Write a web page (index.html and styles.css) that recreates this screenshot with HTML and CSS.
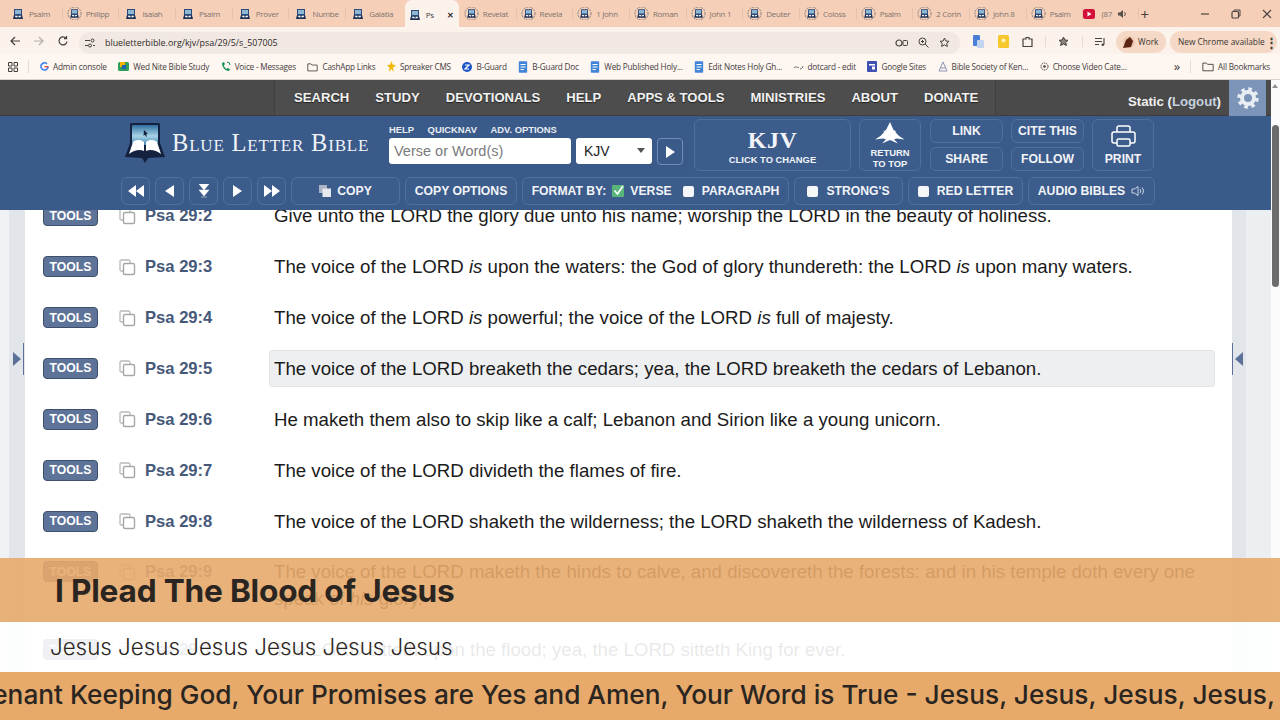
FILE: index.html
```html
<!DOCTYPE html>
<html lang="en">
<head>
  <meta charset="UTF-8" />
  <meta name="viewport" content="width=device-width, initial-scale=1.0" />
  <title>Psalm 29 - Blue Letter Bible</title>
  <link rel="stylesheet" href="styles.css">
</head>
<body>

  <svg class="defs" width="0" height="0">
    <defs>
      <linearGradient id="screenGlow" x1="0" y1="0" x2="0" y2="1">
        <stop offset="0" stop-color="#2f6f9f" />
        <stop offset="0.55" stop-color="#a9d3e6" />
        <stop offset="1" stop-color="#3f86b0" />
      </linearGradient>
      <symbol id="blb" viewBox="0 0 40 42">
        <rect x="5" y="1" width="30" height="24" rx="1.5" fill="#14213f" />
        <rect x="7" y="3" width="26" height="20" fill="url(#screenGlow)" />
        <path d="M19 8l4 4-2 .3 1 2-1 .4-1-2-1.5 1z" fill="#14213f" />
        <path d="M0 35L5 21 20 24 35 21 40 35 23 36 20 41 17 36z" fill="#14213f" />
        <path d="M4 32C9 28 15 27 19 29V20C15 17 10 18 8 20z" fill="#fff" />
        <path d="M36 32C31 28 25 27 21 29V20C25 17 30 18 32 20z" fill="#fff" />
      </symbol>
      <symbol id="fav" viewBox="0 0 12 12">
        <rect x="2" y="1" width="8" height="7" fill="#2c4a78" />
        <rect x="3" y="2" width="6" height="4" fill="#8db7d2" />
        <path d="M1 11L2 7 6 8 10 7 11 11z" fill="#1d3156" />
        <path d="M3 9L3.5 7.5 5.5 8V9.5zM9 9L8.5 7.5 6.5 8V9.5z" fill="#fff" />
      </symbol>
      <symbol id="fav-ring" viewBox="0 0 16 16">
        <circle cx="8" cy="8" r="7" fill="none" stroke="#7c7a78" stroke-width="1" stroke-dasharray="2 1" />
        <use href="#fav" x="2.5" y="2.5" width="11" height="11" />
      </symbol>
      <symbol id="copy" viewBox="0 0 18 18">
        <path d="M5 13H3a2 2 0 0 1-1-1V3a2 2 0 0 1 1-1h8a2 2 0 0 1 1 1v2" fill="none" stroke="#b9b9b9" stroke-width="1.3" />
        <rect x="5.5" y="5.5" width="11" height="11" rx="1.5" fill="#fff" stroke="#a6a6a6" stroke-width="1.4" />
      </symbol>
      <symbol id="doc" viewBox="0 0 12 14">
        <rect x="1" y="0" width="10" height="14" rx="1" fill="#4285d8" />
        <path d="M3 4h6M3 7h6M3 10h4" stroke="#fff" stroke-width="1.2" />
      </symbol>
      <symbol id="folder" viewBox="0 0 14 12">
        <path d="M1 2h4l1.5 1.5H13V11H1z" fill="none" stroke="#4a4542" stroke-width="1.1" />
      </symbol>
    </defs>
  </svg>

  <div class="tabstrip">
    <div class="tab"><svg class="fav"><use href="#fav" /></svg><span>Psalm</span></div>
    <div class="tab"><svg class="fav-r"><use href="#fav-ring" /></svg><span>Philipp</span></div>
    <div class="tab"><svg class="fav"><use href="#fav" /></svg><span>Isaiah</span></div>
    <div class="tab"><svg class="fav"><use href="#fav" /></svg><span>Psalm</span></div>
    <div class="tab"><svg class="fav"><use href="#fav" /></svg><span>Prover</span></div>
    <div class="tab"><svg class="fav"><use href="#fav" /></svg><span>Numbe</span></div>
    <div class="tab tab-last"><svg class="fav"><use href="#fav" /></svg><span>Galatia</span></div>
    <div class="tab tab-active"><svg class="fav"><use href="#fav" /></svg><span>Ps</span><b class="tab-x">✕</b></div>
    <div class="tab"><svg class="fav-r"><use href="#fav-ring" /></svg><span>Revelat</span></div>
    <div class="tab"><svg class="fav-r"><use href="#fav-ring" /></svg><span>Revela</span></div>
    <div class="tab"><svg class="fav-r"><use href="#fav-ring" /></svg><span>1 John</span></div>
    <div class="tab"><svg class="fav-r"><use href="#fav-ring" /></svg><span>Roman</span></div>
    <div class="tab"><svg class="fav-r"><use href="#fav-ring" /></svg><span>John 1</span></div>
    <div class="tab"><svg class="fav-r"><use href="#fav-ring" /></svg><span>Deuter</span></div>
    <div class="tab"><svg class="fav-r"><use href="#fav-ring" /></svg><span>Coloss</span></div>
    <div class="tab"><svg class="fav-r"><use href="#fav-ring" /></svg><span>Psalm</span></div>
    <div class="tab"><svg class="fav-r"><use href="#fav-ring" /></svg><span>2 Corin</span></div>
    <div class="tab"><svg class="fav-r"><use href="#fav-ring" /></svg><span>John 8</span></div>
    <div class="tab"><svg class="fav-r"><use href="#fav-ring" /></svg><span>Psalm</span></div>
    <div class="tab tab-yt">
      <svg width="12" height="10" viewBox="0 0 12 10"><rect width="12" height="10" rx="2.5" fill="#d2103a" /><path d="M4.5 2.5L8.5 5 4.5 7.5z" fill="#fff" /></svg>
      <span>(87</span>
      <svg width="9" height="10" viewBox="0 0 9 10"><path d="M0 3.5h2L5 1v8L2 6.5H0z" fill="#55504c" /><path d="M6.5 3a3 3 0 0 1 0 4" fill="none" stroke="#55504c" /></svg>
    </div>
    <div class="new-tab">+</div>
    <div class="win-controls">
      <svg width="12" height="12" viewBox="0 0 12 12"><path d="M2 6h8" stroke="#4a4542" stroke-width="1.2" /></svg>
      <svg width="12" height="12" viewBox="0 0 12 12"><rect x="2" y="3.5" width="6.5" height="6.5" rx="1" fill="none" stroke="#4a4542" stroke-width="1.2" /><path d="M4 3.5V2h6v6H8.5" fill="none" stroke="#4a4542" /></svg>
      <svg width="12" height="12" viewBox="0 0 12 12"><path d="M2 2l8 8M10 2l-8 8" stroke="#4a4542" stroke-width="1.1" /></svg>
    </div>
  </div>

  <div class="toolbar">
    <svg class="tb-icon" width="12" height="12" viewBox="0 0 12 12"><path d="M11 6H2M6 2L2 6l4 4" fill="none" stroke="#45403d" stroke-width="1.2" /></svg>
    <svg class="tb-icon" width="12" height="12" viewBox="0 0 12 12"><path d="M1 6h9M6 2l4 4-4 4" fill="none" stroke="#b3aeaa" stroke-width="1.2" /></svg>
    <svg class="tb-icon" width="12" height="12" viewBox="0 0 12 12"><path d="M10 6.5A4 4 0 1 1 9 3.2M9.5 1v2.7H7" fill="none" stroke="#45403d" stroke-width="1.2" /></svg>
    <div class="omnibox">
      <svg width="12" height="10" viewBox="0 0 12 10"><path d="M1 2.5h5M1 7.5h3M9 7.5h2" stroke="#45403d" stroke-width="1.1" /><circle cx="8.5" cy="2.5" r="1.5" fill="none" stroke="#45403d" /><circle cx="6" cy="7.5" r="1.5" fill="none" stroke="#45403d" /></svg>
      <span class="url">blueletterbible.org/kjv/psa/29/5/s_507005</span>
      <svg class="omni-end" width="13" height="10" viewBox="0 0 13 10"><circle cx="4" cy="5" r="3" fill="none" stroke="#45403d" stroke-width="1.2" /><rect x="8" y="2.5" width="4.5" height="5" rx="1" fill="none" stroke="#45403d" /></svg>
      <svg width="11" height="11" viewBox="0 0 11 11"><circle cx="4.5" cy="4.5" r="3.5" fill="none" stroke="#45403d" /><path d="M7 7l3.5 3.5M3 4.5h3M4.5 3v3" stroke="#45403d" /></svg>
      <svg width="11" height="11" viewBox="0 0 11 11"><path d="M5.5 1l1.4 3 3.100.3-2.300 2.100.7 3.100-2.900-1.600-2.900 1.600.7-3.100L1 4.300 4.100 4z" fill="none" stroke="#45403d" /></svg>
    </div>
    <div class="ext-group">
      <svg width="11" height="13" viewBox="0 0 11 13"><rect width="7" height="11" rx="1" fill="#4a7fd8" /><rect x="4" y="5" width="7" height="8" rx="1" fill="#c2d4ee" /></svg>
      <svg width="11" height="13" viewBox="0 0 11 13"><rect width="11" height="13" rx="1.5" fill="#f6c82e" /><circle cx="5.5" cy="5.5" r="2" fill="#fff3b8" /></svg>
      <svg width="11" height="12" viewBox="0 0 11 12"><path d="M1 3h3V1.5h3V3h3v7.5H1z" fill="none" stroke="#45403d" stroke-width="1.2" /></svg>
      <i class="tb-sep"></i>
      <svg width="11" height="11" viewBox="0 0 11 11"><path d="M5.5 1l1.4 3 3.100.3-2.300 2.100.7 3.100-2.900-1.600-2.900 1.600.7-3.100L1 4.300 4.100 4z" fill="#8a8480" stroke="#45403d" /></svg>
      <i class="tb-sep"></i>
      <svg width="11" height="10" viewBox="0 0 11 10"><path d="M0 1.5h7M0 4.5h7M0 7.5h4M9 1v6.5" stroke="#45403d" stroke-width="1.1" /><circle cx="7.8" cy="7.8" r="1.3" fill="#45403d" /></svg>
    </div>
    <div class="pill pill-work">
      <svg width="13" height="14" viewBox="0 0 13 14"><circle cx="7" cy="7" r="6" fill="#e9c7ae" /><path d="M1 13L4 5l4-3 3 4-2 6z" fill="#5b2413" /></svg>
      <span>Work</span>
    </div>
    <div class="pill pill-update"><span>New Chrome available</span><b class="dots">⋮</b></div>
  </div>

  <div class="bookmarks">
    <svg class="apps" width="10" height="10" viewBox="0 0 10 10"><path d="M.5.5H4V4H.5zM6 .5h3.500V4H6zM.5 6H4v3.500H.5zM6 6h3.500v3.500H6z" fill="none" stroke="#45403d" /></svg>
    <i class="bm-sep"></i>
    <div class="bm"><svg width="9" height="9" viewBox="0 0 10 10"><path d="M9 5.5A4 4 0 1 1 7.800 2" fill="none" stroke="#4285f4" stroke-width="1.8" /><path d="M5 5.2h4.500" stroke="#ea4335" stroke-width="1.4" /></svg>Admin console</div>
    <div class="bm"><svg width="11" height="9" viewBox="0 0 11 9"><rect width="11" height="9" rx="1.5" fill="#2e9e5b" /><rect x="2" y="0" width="5" height="5" fill="#f4b400" /><rect x="4" y="3" width="4" height="4" fill="#1a5fb4" /></svg>Wed Nite Bible Study</div>
    <div class="bm"><svg width="10" height="11" viewBox="0 0 10 11"><path d="M1 2c0 4 3 8 7 8l1-2-2.5-1L5.5 8C4 7 3 5.5 2.8 4.3L4 3.3 3 1z" fill="#1a8f50" /><path d="M6 1a3 3 0 0 1 3 3" fill="none" stroke="#1a8f50" /></svg>Voice - Messages</div>
    <div class="bm"><svg width="11" height="10"><use href="#folder" /></svg>CashApp Links</div>
    <div class="bm"><svg width="9" height="11" viewBox="0 0 9 11"><path d="M4.5 0l1.2 3.5L9 4.5 6 6.5 6.5 11 4.5 8 2 11l.6-4.500L0 4.500l3.300-1z" fill="#f2b705" /></svg>Spreaker CMS</div>
    <div class="bm"><svg width="10" height="10" viewBox="0 0 10 10"><circle cx="5" cy="5" r="5" fill="#1d55c9" /><path d="M3 3h4L3 7h4" fill="none" stroke="#fff" stroke-width="1.2" /></svg>B-Guard</div>
    <div class="bm"><svg width="10" height="12"><use href="#doc" /></svg>B-Guard Doc</div>
    <div class="bm"><svg width="10" height="12"><use href="#doc" /></svg>Web Published Holy...</div>
    <div class="bm"><svg width="10" height="12"><use href="#doc" /></svg>Edit Notes Holy Gh...</div>
    <div class="bm"><svg width="10" height="8" viewBox="0 0 10 8"><path d="M0 5c2-3 3 1 5-1M6 6c2 0 3-2 3-3" fill="none" stroke="#6b6663" /></svg>dotcard - edit</div>
    <div class="bm"><svg width="10" height="11" viewBox="0 0 10 11"><rect width="10" height="11" rx="1" fill="#3d4fb0" /><rect x="2" y="3" width="6" height="1.5" fill="#fff" /><rect x="5" y="5.5" width="3" height="3" fill="#fff" /></svg>Google Sites</div>
    <div class="bm"><svg width="10" height="11" viewBox="0 0 10 11"><path d="M1 10L5 1l4 9zM2 7h6" fill="none" stroke="#8d94b8" /></svg>Bible Society of Ken...</div>
    <div class="bm"><svg width="9" height="9" viewBox="0 0 9 9"><circle cx="4.5" cy="4.5" r="3.5" fill="none" stroke="#45403d" stroke-dasharray="1.5 .7" /><circle cx="4.5" cy="4.5" r="1.3" fill="#45403d" /></svg>Choose Video Cate...</div>
    <div class="bm-end">
      <span class="chev">»</span>
      <i class="bm-sep"></i>
      <div class="bm"><svg width="12" height="11"><use href="#folder" /></svg>All Bookmarks</div>
    </div>
  </div>

  <div class="window">
    <div class="site">
      <header class="site-nav">
        <nav class="menu">
          <a>SEARCH</a><a>STUDY</a><a>DEVOTIONALS</a><a>HELP</a><a>APPS &amp; TOOLS</a><a>MINISTRIES</a><a>ABOUT</a><a>DONATE</a>
        </nav>
        <div class="user">Static (<span class="logout">Logout</span>)</div>
        <div class="gear">
          <svg width="22" height="22" viewBox="0 0 22 22">
            <circle cx="11" cy="11" r="6" fill="none" stroke="#e8edf4" stroke-width="4" />
            <circle cx="11" cy="11" r="9" fill="none" stroke="#e8edf4" stroke-width="3.5" stroke-dasharray="3.57 3.5" />
          </svg>
        </div>
      </header>

      <div class="site-bar">
        <div class="bar-top">
          <div class="brand">
            <svg width="40" height="42"><use href="#blb" /></svg>
            <span class="brand-name">Blue Letter Bible</span>
          </div>
          <div class="search">
            <div class="search-links"><a>HELP</a><a>QUICKNAV</a><a>ADV. OPTIONS</a></div>
            <div class="search-row">
              <input class="search-input" type="text" placeholder="Verse or Word(s)" />
              <div class="version-select">KJV<i class="caret"></i></div>
              <div class="go"><i class="go-arrow"></i></div>
            </div>
          </div>
          <div class="box kjv-box"><strong>KJV</strong><small>CLICK TO CHANGE</small></div>
          <div class="box return-box">
            <svg width="30" height="24" viewBox="0 0 30 24"><path d="M15 0l3.5 8 3 1.5-1.5.3 4 4.2 5.5 3.5-7.5-1-3 .8 4 4.2-8-3.5-8 3.5 4-4.2-3-.8L0 17.5 5.5 14l4-4.2L8 9.5l3-1.500z" fill="#fff" /></svg>
            <small>RETURN<br>TO TOP</small>
          </div>
          <div class="link-grid">
            <div class="box">LINK</div>
            <div class="box">CITE THIS</div>
            <div class="box">SHARE</div>
            <div class="box">FOLLOW</div>
          </div>
          <div class="box print-box">
            <svg width="25" height="23" viewBox="0 0 25 23"><path d="M6 7V3a2 2 0 0 1 2-2h9a2 2 0 0 1 2 2v4" fill="none" stroke="#fff" stroke-width="1.5" /><path d="M6 18H3a2 2 0 0 1-2-2V9a2 2 0 0 1 2-2h19a2 2 0 0 1 2 2v7a2 2 0 0 1-2 2h-3" fill="none" stroke="#fff" stroke-width="1.5" /><rect x="6" y="14" width="13" height="7" rx="1.5" fill="none" stroke="#fff" stroke-width="1.5" /></svg>
            <span>PRINT</span>
          </div>
        </div>
        <div class="bar-bottom">
          <div class="box nav-btn"><svg width="16" height="12" viewBox="0 0 16 12"><path d="M8 0v12L0 6zM16 0v12L8 6z" fill="#fff" /></svg></div>
          <div class="box nav-btn"><svg width="9" height="12" viewBox="0 0 9 12"><path d="M9 0v12L0 6z" fill="#fff" /></svg></div>
          <div class="box nav-btn"><svg width="10" height="14" viewBox="0 0 10 14"><path d="M0 0h10L5 6zM0 6h10l-5 6zM2 13h6" fill="#fff" stroke="#fff" stroke-width=".5" /></svg></div>
          <div class="box nav-btn"><svg width="9" height="12" viewBox="0 0 9 12"><path d="M0 0v12l9-6z" fill="#fff" /></svg></div>
          <div class="box nav-btn"><svg width="16" height="12" viewBox="0 0 16 12"><path d="M0 0v12l8-6zM8 0v12l8-6z" fill="#fff" /></svg></div>
          <div class="box copy-btn">
            <svg width="12" height="12" viewBox="0 0 12 12"><rect width="8" height="8" fill="#aab4c4" /><rect x="3.5" y="3.5" width="8.5" height="8.5" fill="#e6e9ee" /></svg>
            COPY
          </div>
          <div class="box copy-opts">COPY OPTIONS</div>
          <div class="box format-box">
            FORMAT BY:
            <svg class="check" width="12" height="12" viewBox="0 0 12 12"><rect width="12" height="12" rx="1" fill="#59b57a" /><path d="M2.5 5.5L5.5 9 11 1" fill="none" stroke="#fff" stroke-width="1.6" /></svg>
            <span>VERSE</span>
            <i class="tick tick-para"></i>
            PARAGRAPH
          </div>
          <div class="box strongs-box"><i class="tick"></i>STRONG'S</div>
          <div class="box red-box"><i class="tick"></i>RED LETTER</div>
          <div class="box audio-box">
            AUDIO BIBLES
            <svg width="14" height="12" viewBox="0 0 14 12"><path d="M1 4h2.5L7 1.5v9L3.5 8H1z" fill="none" stroke="#c9d3e2" /><path d="M9 4a3 3 0 0 1 0 4M11 2.5a5 5 0 0 1 0 7" fill="none" stroke="#c9d3e2" /></svg>
          </div>
        </div>
      </div>

      <main class="reader">
        <aside class="gutter gutter-left"><i class="handle handle-left"></i></aside>
        <section class="verses">
          <div class="verse">
            <button class="tools">TOOLS</button><svg class="copy-icon"><use href="#copy" /></svg><a class="ref">Psa 29:2</a>
            <p class="text">Give unto the LORD the glory due unto his name; worship the LORD in the beauty of holiness.</p>
          </div>
          <div class="verse">
            <button class="tools">TOOLS</button><svg class="copy-icon"><use href="#copy" /></svg><a class="ref">Psa 29:3</a>
            <p class="text">The voice of the LORD <em>is</em> upon the waters: the God of glory thundereth: the LORD <em>is</em> upon many waters.</p>
          </div>
          <div class="verse">
            <button class="tools">TOOLS</button><svg class="copy-icon"><use href="#copy" /></svg><a class="ref">Psa 29:4</a>
            <p class="text">The voice of the LORD <em>is</em> powerful; the voice of the LORD <em>is</em> full of majesty.</p>
          </div>
          <div class="verse verse-current">
            <button class="tools">TOOLS</button><svg class="copy-icon"><use href="#copy" /></svg><a class="ref">Psa 29:5</a>
            <p class="text">The voice of the LORD breaketh the cedars; yea, the LORD breaketh the cedars of Lebanon.</p>
          </div>
          <div class="verse">
            <button class="tools">TOOLS</button><svg class="copy-icon"><use href="#copy" /></svg><a class="ref">Psa 29:6</a>
            <p class="text">He maketh them also to skip like a calf; Lebanon and Sirion like a young unicorn.</p>
          </div>
          <div class="verse">
            <button class="tools">TOOLS</button><svg class="copy-icon"><use href="#copy" /></svg><a class="ref">Psa 29:7</a>
            <p class="text">The voice of the LORD divideth the flames of fire.</p>
          </div>
          <div class="verse">
            <button class="tools">TOOLS</button><svg class="copy-icon"><use href="#copy" /></svg><a class="ref">Psa 29:8</a>
            <p class="text">The voice of the LORD shaketh the wilderness; the LORD shaketh the wilderness of Kadesh.</p>
          </div>
          <div class="verse">
            <button class="tools">TOOLS</button><svg class="copy-icon"><use href="#copy" /></svg><a class="ref">Psa 29:9</a>
            <p class="text">The voice of the LORD maketh the hinds to calve, and discovereth the forests: and in his temple doth every one speak of <em>his</em> glory.</p>
          </div>
          <div class="verse">
            <button class="tools">TOOLS</button><svg class="copy-icon"><use href="#copy" /></svg><a class="ref">Psa 29:10</a>
            <p class="text">The LORD sitteth upon the flood; yea, the LORD sitteth King for ever.</p>
          </div>
        </section>
        <aside class="gutter gutter-right"><i class="handle handle-right"></i></aside>
      </main>
    </div>

    <div class="scrollbar"><i class="scroll-up"></i><div class="scroll-thumb"></div></div>
  </div>

  <div class="lower-third">
    <div class="lt-title">I Plead The Blood of Jesus</div>
    <div class="lt-line">Jesus Jesus Jesus Jesus Jesus Jesus</div>
    <div class="lt-ticker"><span>Covenant Keeping God, Your Promises are Yes and Amen, Your Word is True - Jesus, Jesus, Jesus, Jesus, Jesus</span></div>
  </div>

</body>
</html>
```

FILE: styles.css
```css
* {
  box-sizing: border-box;
}

html,
body {
  margin: 0;
  height: 720px;
  overflow: hidden;
}

body {
  position: relative;
  display: flex;
  flex-direction: column;
  font-family: "Liberation Sans", Arial, sans-serif;
  background: #fff;
}

.defs {
  position: absolute;
}

/* browser chrome */
.tabstrip {
  display: flex;
  align-items: center;
  height: 27px;
  padding-left: 6px;
  background: #f6cfb8;
  font-family: "Open Sans", sans-serif;
  font-size: 8px;
  letter-spacing: -0.3px;
  color: #7d746e;
}

.tab {
  display: flex;
  align-items: center;
  gap: 5px;
  flex: none;
  width: 56.7px;
  height: 13px;
  padding-left: 6px;
  border-right: 1px solid #e8c3ac;
  white-space: nowrap;
  overflow: hidden;
}

.fav {
  width: 12px;
  height: 12px;
  flex: none;
}

.fav-r {
  width: 15px;
  height: 15px;
  flex: none;
  margin: 0 -1px 0 -2px;
}

.tab-last {
  border-right: 0;
}

.tab-active {
  width: 54px;
  height: 27px;
  margin: 0 1px 0 2px;
  padding: 2px 0 0 4px;
  background: #fcf2ec;
  border: 0;
  border-radius: 7px 7px 0 0;
  color: #45403d;
}

.tab-x {
  margin-left: 8px;
  font-size: 8px;
  color: #332f2c;
}

.tab-yt {
  width: 57px;
  gap: 6px;
  padding-left: 1px;
  margin-left: -1px;
}

.new-tab {
  padding-left: 1px;
  font-size: 15px;
  color: #45403d;
}

.win-controls {
  display: flex;
  gap: 19px;
  margin-left: 50px;
}

.toolbar {
  display: flex;
  align-items: center;
  height: 27px;
  padding: 0 3px 0 9px;
  background: #fcf2ec;
}

.tb-icon {
  flex: none;
  margin-right: 12px;
}

.omnibox {
  display: flex;
  align-items: center;
  gap: 10px;
  width: 883px;
  height: 22px;
  margin: 4px 0 0 -2px;
  padding: 0 10px 0 5px;
  border-radius: 11px;
  background: #f1e8e3;
}

.url {
  margin-left: -1px;
  flex: 1;
  font-family: "Open Sans", sans-serif;
  font-size: 8.9px;
  color: #2e2a28;
}

.ext-group {
  display: flex;
  align-items: center;
  gap: 13.3px;
  margin-left: 13px;
  margin-top: 2px;
}

.tb-sep {
  width: 1px;
  height: 11px;
  margin: 0 -1px;
  background: #e7d9d0;
}

.pill {
  display: flex;
  align-items: center;
  height: 22px;
  margin-top: 2px;
  border-radius: 11px;
  background: #f5d8c6;
  font-family: "Open Sans", sans-serif;
  font-size: 8.3px;
  color: #3a3532;
  white-space: nowrap;
}

.pill-work {
  gap: 3px;
  margin-left: 10px;
  width: 50px;
  padding-left: 6px;
}

.pill-update {
  margin-left: 4px;
  width: 107px;
  padding-left: 8px;
  justify-content: space-between;
}

.dots {
  font-size: 13px;
  padding-right: 3px;
}

.bookmarks {
  display: flex;
  align-items: center;
  height: 26px;
  padding: 0 10px 0 8px;
  background: #fdf6f1;
  border-bottom: 1px solid #d9d3cf;
  font-family: "Open Sans", sans-serif;
  font-size: 8.2px;
  letter-spacing: -0.2px;
  color: #45403d;
  white-space: nowrap;
}

.bm-sep {
  width: 1px;
  height: 13px;
  background: #e7dcd5;
  margin: 0 11px 0 10px;
}

.bm {
  display: flex;
  align-items: center;
  gap: 4px;
  margin-right: 11.5px;
}

.bm svg {
  flex: none;
}

.bm-end {
  display: flex;
  align-items: center;
  margin-left: auto;
}

.bm-end .bm {
  margin: 0;
}

.chev {
  font-size: 13px;
  color: #45403d;
  padding-bottom: 2px;
}

/* site */
.window {
  flex: 1;
  display: flex;
  min-height: 0;
}

.site {
  flex: 1;
  display: flex;
  flex-direction: column;
  min-width: 0;
}

.site-nav {
  display: flex;
  height: 36px;
  padding-left: 274px;
  background: #4a4a4a;
  border-bottom: 1px solid #3f3f3f;
}

.menu {
  display: flex;
  align-items: center;
  width: 722px;
  padding-left: 6px;
  background: #4d4d4d;
  border-left: 1px solid #404040;
  border-right: 1px solid #404040;
}

.menu a {
  padding: 0 13px;
  font-size: 13.1px;
  font-weight: bold;
  color: #f2f2f2;
  white-space: nowrap;
  text-shadow: 0 1px 1px #222;
}

.user {
  margin-left: auto;
  align-self: flex-end;
  padding-bottom: 6px;
  font-size: 13.2px;
  font-weight: bold;
  color: #f0f0f0;
}

.logout {
  color: #c5d0de;
}

.gear {
  display: flex;
  align-items: center;
  justify-content: center;
  width: 37px;
  height: 36px;
  margin: 0 5px 0 8px;
  background: #7b94b8;
}

.site-bar {
  display: flex;
  flex-direction: column;
  gap: 6px;
  height: 94px;
  padding-top: 3px;
  background: #3a5a8a;
}

.bar-top {
  display: flex;
  height: 52px;
}

.brand {
  display: flex;
  align-items: center;
  gap: 7px;
  width: 264px;
  margin-left: 125px;
  padding-bottom: 4px;
}

.brand-name {
  font-family: "Liberation Serif", serif;
  font-variant: small-caps;
  font-size: 24.5px;
  letter-spacing: 0.8px;
  color: #f1f3f6;
  white-space: nowrap;
}

.search {
  width: 294px;
  margin-right: 11px;
}

.search-links {
  display: flex;
  gap: 13.6px;
  height: 19px;
  font-size: 9.4px;
  font-weight: bold;
  color: #e8ecf2;
  align-items: center;
  padding-top: 1px;
}

.search-row {
  display: flex;
  gap: 5px;
}

.search-input {
  width: 182px;
  height: 26px;
  padding: 0 5px;
  border: 0;
  border-radius: 3px;
  font-family: inherit;
  font-size: 14.5px;
}

.search-input::placeholder {
  color: #7b7b7b;
  opacity: 1;
}

.version-select {
  position: relative;
  width: 76px;
  height: 26px;
  padding: 5px 0 0 8px;
  border-radius: 3px;
  background: #fff;
  font-size: 14px;
  color: #222;
}

.caret {
  position: absolute;
  top: 10px;
  right: 7px;
  border: 4px solid transparent;
  border-top: 5px solid #555;
  border-bottom: 0;
}

.go {
  display: flex;
  align-items: center;
  justify-content: center;
  width: 26px;
  height: 27px;
  border: 1px solid #6f8db8;
  border-radius: 4px;
}

.go-arrow {
  border: 6px solid transparent;
  border-left: 9px solid #fff;
  border-right: 0;
}

.box {
  display: flex;
  align-items: center;
  justify-content: center;
  flex: none;
  border: 1px solid #4f6f9d;
  border-radius: 6px;
  background: #3c5c8c;
  font-size: 12.2px;
  font-weight: bold;
  color: #f2f4f7;
  white-space: nowrap;
}

.kjv-box {
  flex-direction: column;
  width: 157px;
  padding-top: 4px;
}

.kjv-box strong {
  font-family: "Liberation Serif", serif;
  font-size: 24px;
  line-height: 25px;
  letter-spacing: 0.5px;
}

.kjv-box small {
  font-size: 9.4px;
  line-height: 13px;
}

.return-box {
  flex-direction: column;
  width: 62px;
  margin-left: 8px;
}

.return-box svg {
  margin-bottom: 1px;
}

.return-box small {
  font-size: 9.4px;
  line-height: 11px;
  text-align: center;
}

.link-grid {
  display: grid;
  grid-template-columns: 73px 73px;
  grid-template-rows: 24px 24px;
  gap: 4px 8px;
  margin: 0 8px 0 9px;
}

.print-box {
  flex-direction: column;
  gap: 4px;
  width: 62px;
}

.bar-bottom {
  display: flex;
  gap: 5px;
  height: 28px;
  padding-left: 121px;
}

.nav-btn {
  width: 29px;
}

.copy-btn {
  gap: 6px;
  width: 109px;
}

.copy-opts {
  width: 112px;
}

.format-box {
  width: 267px;
}

.check {
  margin: 0 6px;
}

.tick {
  width: 11px;
  height: 11px;
  border-radius: 2px;
  background: #f5f6f8;
  margin-right: 8px;
}

.tick-para {
  margin-left: 11px;
}

.strongs-box {
  width: 109px;
}

.red-box {
  width: 115px;
}

.audio-box {
  gap: 6px;
  width: 127px;
}

/* verses */
.reader {
  flex: 1;
  display: flex;
  min-height: 0;
  overflow: hidden;
}

.gutter {
  position: relative;
  flex: none;
  background: #e6eaee;
}

.gutter-left {
  width: 25px;
  background: linear-gradient(90deg, #f0f2f5 0 9px, #e2e6eb 9px);
}

.gutter-right {
  width: 39px;
  background: linear-gradient(90deg, #e2e6eb 0 14px, #eceff2 14px);
}

.handle {
  position: absolute;
  top: 142px;
  width: 0;
  height: 0;
  border: 7px solid transparent;
}

.handle-left {
  left: 13px;
  border-left: 8px solid #5b7199;
  border-right: 0;
}

.handle-right {
  left: 3px;
  border-right: 8px solid #5b7199;
  border-left: 0;
}

.handle::after {
  content: "";
  position: absolute;
  top: -16px;
  height: 32px;
  width: 1px;
  background: #5b7199;
}

.handle-left::after {
  left: 2px;
}

.handle-right::after {
  left: -3px;
}

.verses {
  flex: 1;
  min-width: 0;
  margin-top: -12.6px;
  padding: 0 17px 0 18px;
  background: #fff;
}

.verse {
  display: grid;
  grid-template-columns: 55px 47px 124px 1fr;
  align-items: start;
  margin-bottom: 13.86px;
}

.tools {
  height: 21px;
  margin-top: 8px;
  padding: 0;
  border: 1px solid #3e4f6c;
  border-radius: 4px;
  background: #5d7398;
  font-family: inherit;
  font-size: 12.2px;
  font-weight: bold;
  color: #fff;
}

.copy-icon {
  width: 18px;
  height: 18px;
  margin: 9.5px 0 0 20px;
}

.ref {
  font-size: 16.6px;
  font-weight: bold;
  line-height: 27px;
  padding-top: 5px;
  color: #46597a;
}

.text {
  margin: 0;
  padding: 4px 4px;
  border: 1px solid transparent;
  border-radius: 3px;
  font-size: 18.67px;
  line-height: 27px;
  color: #1b1b1b;
}

.verse-current .text {
  background: #eeeff1;
  border-color: #e2e4e7;
}

.scrollbar {
  position: relative;
  flex: none;
  width: 9px;
  padding: 45px 1px 0;
  background: #fbfbfb;
}

.scroll-up {
  position: absolute;
  top: 4px;
  left: 1px;
  border: 3.5px solid transparent;
  border-bottom: 4px solid #8f8f8f;
  border-top: 0;
}

.scroll-thumb {
  height: 162px;
  border-radius: 4px;
  background: #6c6c6c;
}

/* video lower third */
.lower-third {
  position: absolute;
  left: 0;
  right: 0;
  bottom: 0;
  display: flex;
  flex-direction: column;
  font-family: Inter, sans-serif;
  color: #2a2521;
}

.lt-title {
  height: 64px;
  padding: 12px 0 0 55px;
  background: rgba(231, 170, 108, 0.9);
  font-size: 31.6px;
  font-weight: 700;
  line-height: 42px;
  letter-spacing: -0.2px;
}

.lt-line {
  height: 50px;
  padding: 9px 0 0 50px;
  background: rgba(255, 255, 255, 0.9);
  font-size: 22.35px;
  font-weight: 300;
  line-height: 32px;
}

.lt-ticker {
  height: 48px;
  padding-top: 6px;
  background: #e7aa6b;
  font-size: 26.25px;
  font-weight: 500;
  line-height: 34px;
  white-space: nowrap;
  overflow: hidden;
}

.lt-ticker span {
  display: inline-block;
  margin-left: -57px;
}
```
